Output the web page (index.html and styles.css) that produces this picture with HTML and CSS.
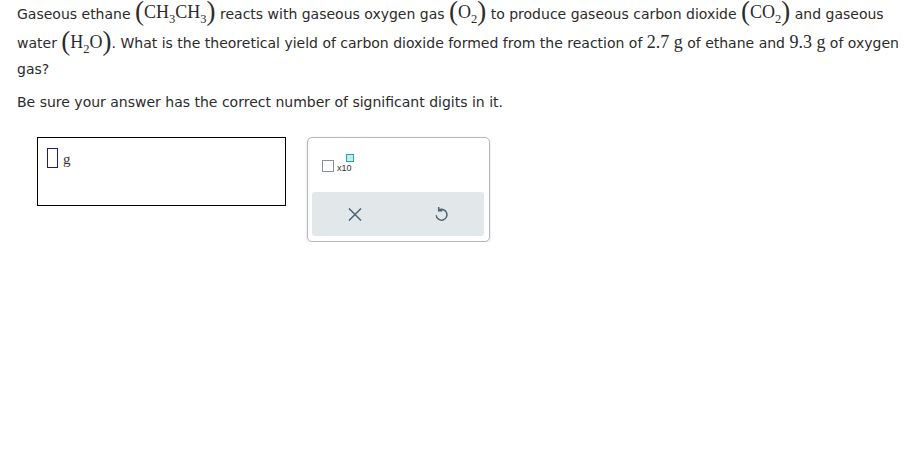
FILE: index.html
```html
<!DOCTYPE html>
<html>
<head>
<meta charset="utf-8">
<link rel="stylesheet" href="styles.css">
</head>
<body>
<div class="question">
  <p class="prompt">Gaseous ethane <span class="m chem"><span class="paren">(</span>CH<sub>3</sub>CH<sub>3</sub><span class="paren">)</span></span> reacts with gaseous oxygen gas <span class="m chem"><span class="paren">(</span>O<sub>2</sub><span class="paren">)</span></span> to produce gaseous carbon dioxide <span class="m chem"><span class="paren">(</span>CO<sub>2</sub><span class="paren">)</span></span> and gaseous water <span class="m chem"><span class="paren">(</span>H<sub>2</sub>O<span class="paren">)</span></span>. What is the theoretical yield of carbon dioxide formed from the reaction of <span class="m">2.7</span> <span class="m">g</span> of ethane and <span class="m">9.3</span> <span class="m">g</span> of oxygen gas?</p>
  <p class="note">Be sure your answer has the correct number of significant digits in it.</p>
  <div class="answer-row">
    <div class="answer-box">
      <span class="slot"></span><span class="unit">g</span>
    </div>
    <div class="tools">
      <div class="tools-top">
        <span class="sci">
          <span class="sci-base"></span><span class="sci-x">x10</span><span class="sci-exp"></span>
        </span>
      </div>
      <div class="tools-bar">
        <span class="btn">
          <svg width="14" height="13" viewBox="0 0 14 13"><path d="M1 0.5 L13 12.5 M13 0.5 L1 12.5" stroke="#4f6470" stroke-width="1.5" fill="none"/></svg>
        </span>
        <span class="btn">
          <svg width="15" height="16" viewBox="0 0 15 16"><path d="M4.5 4.3 A5.4 5.4 0 1 1 2.2 9.2" stroke="#4f6470" stroke-width="1.5" fill="none"/><path d="M4.7 1 L4.7 4.7 L8.4 4.7" stroke="#4f6470" stroke-width="1.5" fill="none"/></svg>
        </span>
      </div>
    </div>
  </div>
</div>
</body>
</html>
```
FILE: styles.css
```css
body {
  margin: 0;
  background: #fff;
  font-family: Verdana, "DejaVu Sans", sans-serif;
  font-size: 14px;
  color: #2b2b2b;
}
.question {
  padding: 0 0 0 17px;
  width: 892px;
}
.prompt {
  margin: -3.4px 0 0 0;
  line-height: 26px;
}
.m {
  font-family: "Liberation Serif", "DejaVu Serif", serif;
  font-size: 18px;
  line-height: 0;
}
.chem::before {
  content: "";
  display: inline-block;
  width: 0;
  height: 21.85px;
  vertical-align: baseline;
}
.m sub {
  font-size: 12.5px;
  vertical-align: -5px;
  line-height: 0;
}
.paren {
  font-size: 27px;
  line-height: 0;
  vertical-align: -2px;
}
.note {
  margin: 10px 0 0 0;
  line-height: 20px;
}
.answer-row {
  display: flex;
  gap: 21px;
  margin-top: 24.4px;
  margin-left: 20px;
  align-items: flex-start;
}
.answer-box {
  width: 249px;
  height: 69px;
  border: 1px solid #000;
  display: flex;
  align-items: flex-start;
  padding: 10px 0 0 9px;
  box-sizing: border-box;
}
.slot {
  width: 9px;
  height: 18px;
  border: 1px solid #1a1a8c;
  display: inline-block;
}
.unit {
  font-family: "Liberation Serif", serif;
  font-size: 15px;
  color: #333;
  margin-left: 5px;
  margin-top: 3px;
  line-height: 16px;
}
.tools {
  width: 183px;
  height: 105px;
  border: 1px solid #b3b9bd;
  border-radius: 5px;
  box-shadow: 0 1px 3px rgba(0,0,0,0.15);
  box-sizing: border-box;
  padding: 0 5px 5px 4px;
  display: flex;
  flex-direction: column;
}
.tools-top {
  height: 54px;
  position: relative;
}
.sci {
  position: absolute;
  left: 10px;
  top: 16px;
  width: 40px;
  height: 22px;
}
.sci-base {
  position: absolute;
  left: 0;
  top: 6px;
  width: 10px;
  height: 10px;
  border: 1.5px solid #8a9296;
}
.sci-x {
  position: absolute;
  left: 15px;
  top: 9px;
  font-family: "Liberation Sans", Arial, sans-serif;
  font-size: 9px;
  line-height: 10px;
  color: #333;
}
.sci-exp {
  position: absolute;
  left: 24px;
  top: 0;
  width: 6px;
  height: 6px;
  border: 1.5px solid #2aa3a8;
  background: #bfeef0;
}
.tools-bar {
  flex: 1;
  background: #e2e7ea;
  border-radius: 3px;
  display: flex;
  justify-content: space-around;
  align-items: center;
  padding-top: 1px;
}
.btn {
  display: flex;
  align-items: center;
  justify-content: center;
  width: 40px;
  height: 30px;
}
```
